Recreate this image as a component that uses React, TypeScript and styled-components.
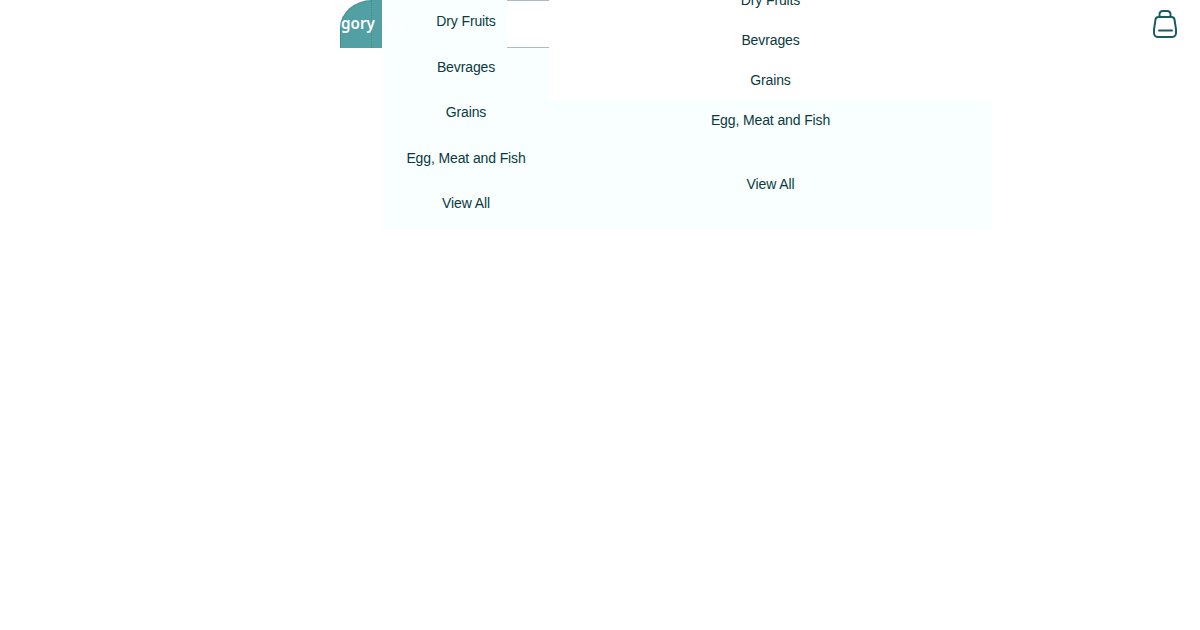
import { FC } from "react";
import styled, { createGlobalStyle } from "styled-components";

const GlobalStyle = createGlobalStyle`
  html, body {
    margin: 0;
    background: #fff;
    font-family: "Liberation Sans", Arial, sans-serif;
  }
`;

const mainItems = ["Dry Fruits", "Bevrages", "Grains", "Egg, Meat and Fish", "View All"];
const wideItems = ["Dry Fruits", "Bevrages", "Grains"];

const BagIcon: FC = () => (
  <BagSvg viewBox="0 0 26 30" fill="none" stroke="#1b5c64" strokeWidth="2" strokeLinecap="round">
    <path d="M7.500 8V5.500C7.500 3.500 9 2 11 2h4C17 2 18.500 3.500 18.500 5.500V8" />
    <path d="M6.500 8h13C21.200 8 22.200 9 22.500 10.500L24 20.500V24C24 26.500 22 28 20 28H6C4 28 2 26.500 2 24V20.500L3.500 10.500C3.800 9 4.800 8 6.500 8z" />
    <path d="M7 21.500h13" />
  </BagSvg>
);

const App: FC = () => (
  <>
    <GlobalStyle />
    <Page>
      <Header>
        <CategoryButton>
          <Curve>
            <CategoryLabel>gory</CategoryLabel>
          </Curve>
        </CategoryButton>
        <Menu>
          <MenuCap />
          <Chevron viewBox="0 0 16 11" fill="none" stroke="#fff" strokeWidth="2">
            <path d="M1 10l7-8 7 8" />
          </Chevron>
          <MenuList>
            {mainItems.map((item) => (
              <MenuItem key={item}>{item}</MenuItem>
            ))}
          </MenuList>
        </Menu>
        <WideMenu>
          {wideItems.map((item) => (
            <WideItem key={item}>{item}</WideItem>
          ))}
          <WideFooter>
            <WideItem>Egg, Meat and Fish</WideItem>
            <WideViewAll>View All</WideViewAll>
          </WideFooter>
        </WideMenu>
        <BagIcon />
      </Header>
    </Page>
  </>
);

export default App;

const Page = styled.div`
  min-height: 100vh;
`;

const Header = styled.header`
  display: flex;
  align-items: flex-start;
  height: 48px;
  padding: 0 22px 0 340px;
`;

const CategoryButton = styled.div`
  flex: none;
  display: flex;
  width: 42px;
  height: 48px;
  margin-right: 1px;
  background: linear-gradient(to right, transparent 32px, #52a0a4 32px);
`;

const Curve = styled.div`
  display: flex;
  align-items: center;
  width: 32px;
  height: 48px;
  padding-bottom: 3px;
  box-sizing: border-box;
  background: #52a0a4;
  border-top-left-radius: 32px 28px;
  border-top: 1px solid #4a8a8e;
  border-left: 1px solid #4a8a8e;
  border-right: 1px dotted #478589;
`;

const CategoryLabel = styled.span`
  font-family: "Noto Sans", sans-serif;
  font-size: 15.200px;
  font-weight: 600;
  line-height: 22px;
  color: #fff;
  white-space: nowrap;
`;

const Menu = styled.nav`
  position: relative;
  flex: none;
  width: 166px;
  height: 229px;
  background: #f8fffe;
`;

const MenuCap = styled.div`
  position: absolute;
  right: 0;
  top: 0;
  width: 42px;
  height: 48px;
  box-sizing: border-box;
  background: #fff;
  border-top: 1px solid #a9bfc2;
  border-bottom: 1px solid #a9bfc2;
`;

const Chevron = styled.svg`
  position: absolute;
  left: 5px;
  top: 18px;
  width: 16px;
  height: 11px;
`;

const MenuList = styled.ul`
  position: relative;
  list-style: none;
  margin: -1.500px 0 0;
  padding: 0;
`;

const MenuItem = styled.li`
  display: flex;
  align-items: center;
  justify-content: center;
  height: 45.500px;
  font-size: 14px;
  letter-spacing: -0.120px;
  color: #0a3a40;
`;

const WideMenu = styled.div`
  flex: none;
  width: 443px;
  margin-top: -20px;
`;

const WideItem = styled.div`
  display: flex;
  align-items: center;
  justify-content: center;
  height: 40px;
  font-size: 14px;
  letter-spacing: -0.120px;
  color: #0a3a40;
`;

const WideFooter = styled.div`
  background: #f8fffe;
  height: 129px;
`;

const WideViewAll = styled(WideItem)`
  margin-top: 24px;
`;

const BagSvg = styled.svg`
  flex: none;
  width: 26px;
  height: 30px;
  margin: 9px 0 0 auto;
`;
